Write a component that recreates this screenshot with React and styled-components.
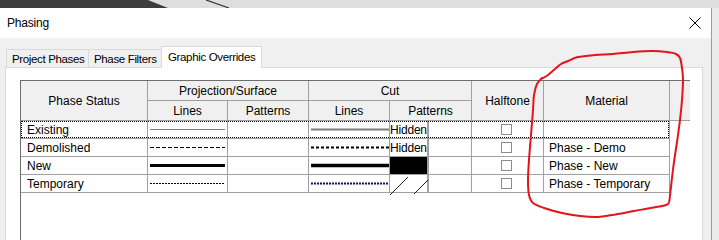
import React from 'react'
import styled, { createGlobalStyle } from 'styled-components'

const GlobalStyle = createGlobalStyle`
  html, body {
    margin: 0;
    padding: 0;
  }
  body {
    background: #ebebeb;
    font-family: "Liberation Sans", Arial, sans-serif;
    font-size: 12px;
    color: #000;
    overflow: hidden;
  }
`

const COLS = '127px 80px 81px 81px 82px 72px 126px 1fr'

const Screen = styled.div`
  position: relative;
  width: 719px;
  height: 240px;
  overflow: hidden;
  display: flex;
  flex-direction: column;
`
const Desktop = styled.svg`
  display: block;
  flex: none;
`
const Stage = styled.div`
  flex: 1;
  display: flex;
  min-height: 0;
`
const Window = styled.div`
  width: 711px;
  display: flex;
  flex-direction: column;
  background: #f0f0f0;
  border-right: 1px solid #9c9c9c;
`
const Backdrop = styled.div`
  flex: 1;
  background: #ebebeb;
`
const TitleBar = styled.div`
  flex: none;
  height: 30px;
  background: #fff;
  display: flex;
  align-items: center;
  justify-content: space-between;
  padding: 0 10px 0 7px;
  letter-spacing: -0.2px;
`
const Body = styled.div`
  flex: 1;
  display: flex;
  flex-direction: column;
  padding: 7px 8px 0 5px;
  min-height: 0;
`
const TabRow = styled.div`
  flex: none;
  height: 22px;
  display: flex;
  align-items: flex-end;
  padding-left: 1px;
  position: relative;
  z-index: 1;
`
const Tab = styled.div`
  box-sizing: border-box;
  width: ${p => p.$width}px;
  height: ${p => (p.$active ? 22 : 18)}px;
  margin-bottom: ${p => (p.$active ? -1 : 0)}px;
  margin-left: -1px;
  border: 1px solid #d9d9d9;
  border-bottom: none;
  background: ${p => (p.$active ? '#fff' : '#f0f0f0')};
  display: flex;
  align-items: ${p => (p.$active ? 'flex-start' : 'center')};
  padding: ${p => (p.$active ? '4px 0 0 6px' : '0 0 0 5px')};
  font-size: 11.5px;
  letter-spacing: -0.35px;
  white-space: nowrap;
  &:first-child {
    margin-left: 0;
  }
`
const Panel = styled.div`
  flex: 1;
  display: flex;
  background: #fff;
  border: 1px solid #d9d9d9;
  border-bottom: none;
  padding: 12px 12px 0 14px;
  min-height: 0;
`
const GridBox = styled.div`
  flex: 1;
  display: flex;
  flex-direction: column;
  background: #fff;
  border-left: 1px solid #6e6e6e;
  border-top: 1px solid #6e6e6e;
`
const Header = styled.div`
  display: grid;
  grid-template-columns: ${COLS};
  grid-template-rows: 20px 20px;
  background: #f0f0f0;
`
const HeadCell = styled.div`
  box-sizing: border-box;
  grid-column: ${p => p.$col};
  grid-row: ${p => p.$row};
  border-right: ${p => (p.$bare ? 'none' : '1px solid #a0a0a0')};
  border-bottom: 1px solid #a0a0a0;
  display: flex;
  align-items: center;
  justify-content: center;
  white-space: nowrap;
`
const Row = styled.div`
  position: relative;
  display: grid;
  grid-template-columns: ${COLS};
  height: 18px;
  ${p => p.$focused && `
    &::after {
      content: '';
      position: absolute;
      left: 0;
      top: 0;
      width: 648px;
      height: 17px;
      box-sizing: border-box;
      border: 1px dotted #000;
      pointer-events: none;
    }
  `}
`
const Cell = styled.div`
  box-sizing: border-box;
  border-right: ${p => (p.$bare ? 'none' : '1px solid #a0a0a0')};
  border-bottom: ${p => (p.$bare ? 'none' : '1px solid #a0a0a0')};
  display: flex;
  align-items: center;
  justify-content: ${p => (p.$center ? 'center' : 'flex-start')};
  padding-left: ${p => p.$pad || 0}px;
  white-space: nowrap;
  overflow: visible;
`
const Swatch = styled.div`
  box-sizing: border-box;
  width: 39px;
  height: 17px;
  align-self: flex-start;
  border-right: 2px solid #a0a0a0;
  background: ${p => (p.$fill ? '#000' : 'transparent')};
  display: flex;
  align-items: center;
  position: relative;
  letter-spacing: -0.2px;
`
const Hatch = styled.svg`
  position: absolute;
  left: 0;
  top: 0;
  overflow: visible;
`
const CheckBox = styled.div`
  box-sizing: border-box;
  width: 11px;
  height: 11px;
  margin-left: -3px;
  border: 1px solid #8c8c8c;
  background: #fff;
`
const Ink = styled.svg`
  position: absolute;
  left: 0;
  top: 0;
  pointer-events: none;
`

const LineSample = ({ from, to, weight, color = '#000', dash }) => (
  <svg width={to + 2} height="17" style={{ display: 'block', alignSelf: 'flex-start' }}>
    <line x1={from} x2={to} y1="8.5" y2="8.5" stroke={color} strokeWidth={weight} strokeDasharray={dash} />
  </svg>
)

const rows = [
  {
    name: 'Existing',
    proj: { weight: 1, color: '#7c7c7c' },
    cut: { weight: 2, color: '#7c7c7c' },
    pattern: 'hidden',
    material: '',
  },
  {
    name: 'Demolished',
    proj: { weight: 1, dash: '4 2' },
    cut: { weight: 2, dash: '3 2' },
    pattern: 'hidden',
    material: 'Phase - Demo',
  },
  {
    name: 'New',
    proj: { weight: 3 },
    cut: { weight: 3.5 },
    pattern: 'solid',
    material: 'Phase - New',
  },
  {
    name: 'Temporary',
    proj: { weight: 1, dash: '2 1' },
    cut: { weight: 2, dash: '2 1', color: '#10105a' },
    pattern: 'hatch',
    material: 'Phase - Temporary',
  },
]

const smooth = pts => {
  let d = `M ${pts[0][0]} ${pts[0][1]}`
  for (let i = 0; i < pts.length - 1; i++) {
    const p0 = pts[i - 1] || pts[i]
    const p1 = pts[i]
    const p2 = pts[i + 1]
    const p3 = pts[i + 2] || p2
    const c1 = [p1[0] + (p2[0] - p0[0]) / 6, p1[1] + (p2[1] - p0[1]) / 6]
    const c2 = [p2[0] - (p3[0] - p1[0]) / 6, p2[1] - (p3[1] - p1[1]) / 6]
    d += ` C ${c1[0]} ${c1[1]} ${c2[0]} ${c2[1]} ${p2[0]} ${p2[1]}`
  }
  return d
}

const loop = [
  [541, 79], [548, 75], [555, 69], [561, 64], [568, 61], [578, 57], [595, 55],
  [613, 54], [633, 52], [652, 51], [667, 52], [676, 54], [680, 58], [682, 68],
  [683, 80], [682, 100], [680, 120], [677, 142], [674, 162], [672, 178],
  [670, 195], [668, 204], [656, 207], [634, 211], [612, 215], [598, 217],
  [580, 216], [562, 213], [544, 208], [533, 203], [529, 195], [528, 180],
  [529, 160], [531, 135], [533, 110], [534, 95], [537, 84], [542, 78],
]

function Pattern({ kind }) {
  if (kind === 'solid') return <Swatch $fill />
  if (kind === 'hatch') {
    return (
      <Swatch>
        <Hatch width="37" height="17">
          <line x1="0" y1="20" x2="18" y2="2" stroke="#1a1a40" strokeWidth="1" />
          <line x1="24" y1="19" x2="38" y2="5" stroke="#1a1a40" strokeWidth="1" />
        </Hatch>
      </Swatch>
    )
  }
  return <Swatch>Hidden</Swatch>
}

export default function App() {
  return (
    <>
      <GlobalStyle />
      <Screen>
        <Desktop width="719" height="8">
          <rect width="719" height="8" fill="#3d3d3d" />
          <polygon points="148,0 719,0 719,8 168,8" fill="#dedede" />
          <line x1="206" y1="0" x2="229" y2="8" stroke="#2e2e2e" strokeWidth="1.2" />
        </Desktop>
        <Stage>
          <Window>
            <TitleBar>
              <span>Phasing</span>
              <svg width="12" height="12">
                <path d="M0.5 0.5 L11.5 11.5 M11.5 0.5 L0.5 11.5" stroke="#000" strokeWidth="1" />
              </svg>
            </TitleBar>
            <Body>
              <TabRow>
                <Tab $width={83}>Project Phases</Tab>
                <Tab $width={74}>Phase Filters</Tab>
                <Tab $width={101} $active>Graphic Overrides</Tab>
              </TabRow>
              <Panel>
                <GridBox>
                  <Header>
                    <HeadCell $col="1" $row="1 / 3">Phase Status</HeadCell>
                    <HeadCell $col="2 / 4" $row="1">Projection/Surface</HeadCell>
                    <HeadCell $col="4 / 6" $row="1">Cut</HeadCell>
                    <HeadCell $col="6" $row="1 / 3">Halftone</HeadCell>
                    <HeadCell $col="7" $row="1 / 3">Material</HeadCell>
                    <HeadCell $col="8" $row="1 / 3" $bare />
                    <HeadCell $col="2" $row="2">Lines</HeadCell>
                    <HeadCell $col="3" $row="2">Patterns</HeadCell>
                    <HeadCell $col="4" $row="2">Lines</HeadCell>
                    <HeadCell $col="5" $row="2">Patterns</HeadCell>
                  </Header>
                  {rows.map((r, i) => (
                    <Row key={r.name} $focused={i === 0}>
                      <Cell $pad={6}>{r.name}</Cell>
                      <Cell>
                        <LineSample from={2} to={77} {...r.proj} />
                      </Cell>
                      <Cell />
                      <Cell>
                        <LineSample from={2} to={80} {...r.cut} />
                      </Cell>
                      <Cell>
                        <Pattern kind={r.pattern} />
                      </Cell>
                      <Cell $center>
                        <CheckBox />
                      </Cell>
                      <Cell $pad={5}>{r.material}</Cell>
                      <Cell $bare />
                    </Row>
                  ))}
                </GridBox>
              </Panel>
            </Body>
          </Window>
          <Backdrop />
        </Stage>
        <Ink width="719" height="240">
          <path d={smooth(loop)} fill="none" stroke="#e3141b" strokeWidth="2" strokeLinecap="round" strokeLinejoin="round" />
        </Ink>
      </Screen>
    </>
  )
}
